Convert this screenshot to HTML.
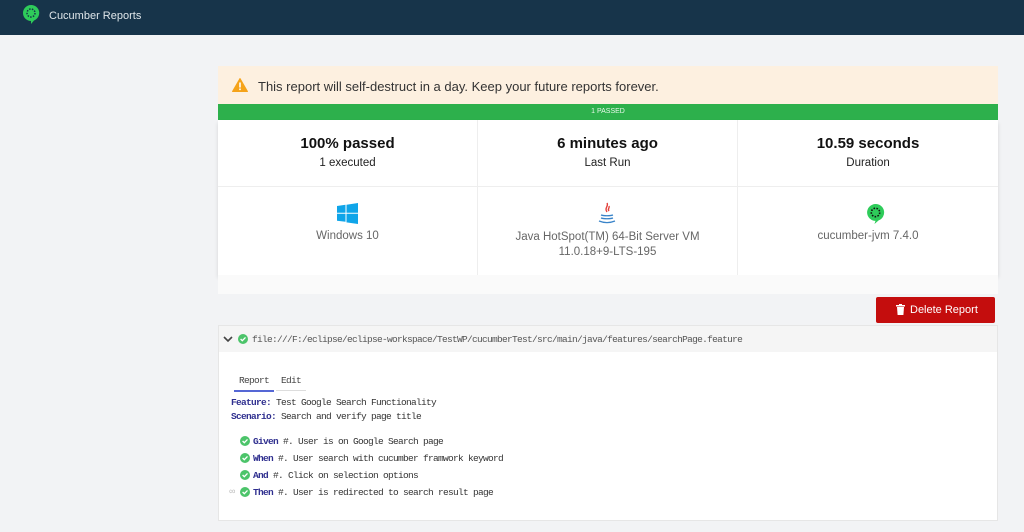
<!DOCTYPE html>
<html><head><meta charset="utf-8"><style>
*{margin:0;padding:0;box-sizing:border-box}
body{width:1024px;height:532px;overflow:hidden;background:#f2f3f5;font-family:"Liberation Sans",sans-serif;position:relative}
.a{position:absolute}
.hdr{left:0;top:0;width:1024px;height:35px;background:#17344a}
.c{text-align:center}
.mono{font-family:"Liberation Mono",monospace;font-size:9.5px;color:#333;letter-spacing:-0.7px;white-space:nowrap}
.kw{color:#2f2f8f;font-weight:bold}
</style></head><body>
<div class="a hdr"></div>
<svg class="a" style="left:22px;top:4px" width="18" height="20" viewBox="0 0 18 20"><path d="M9 1a8 8 0 1 0 0 16l0 3 3-3.5A8 8 0 0 0 9 1z" fill="#2ecc5a"/><circle cx="9" cy="9" r="4" fill="none" stroke="#17344a" stroke-width="1.5" stroke-dasharray="1.5 1.3"/></svg>
<div class="a" style="left:49px;top:10px;color:#dfe6ea;font-size:11px">Cucumber Reports</div>

<div class="a" style="left:218px;top:66px;width:780px;height:38px;background:#fdf0e0"></div>
<svg class="a" style="left:232px;top:78px" width="16" height="14" viewBox="0 0 16 14"><path d="M8 0.5L15.5 13.5H0.5Z" fill="#f5a31a" stroke="#f5a31a" stroke-linejoin="round"/><rect x="7.2" y="4.5" width="1.6" height="5" fill="#fff"/><rect x="7.2" y="10.5" width="1.6" height="1.6" fill="#fff"/></svg>
<div class="a" style="left:258px;top:79px;font-size:13px;color:#333">This report will self-destruct in a day. Keep your future reports forever.</div>
<div class="a c" style="left:218px;top:104px;width:780px;height:16px;background:#2db04c;color:#e8f8ea;font-size:7px;line-height:16px">1 PASSED</div>

<div class="a" style="left:218px;top:120px;width:780px;height:155px;background:#fff;box-shadow:0 3px 4px rgba(0,0,0,.12)"></div>
<div class="a" style="left:477px;top:120px;width:1px;height:155px;background:#eee"></div>
<div class="a" style="left:737px;top:120px;width:1px;height:155px;background:#eee"></div>
<div class="a" style="left:218px;top:186px;width:780px;height:1px;background:#eee"></div>

<div class="a c" style="left:218px;top:135px;width:259px;font-size:15px;font-weight:bold;color:#111">100% passed</div>
<div class="a c" style="left:218px;top:157px;width:259px;font-size:11.5px;color:#222">1 executed</div>
<div class="a c" style="left:478px;top:135px;width:259px;font-size:15px;font-weight:bold;color:#111">6 minutes ago</div>
<div class="a c" style="left:478px;top:157px;width:259px;font-size:11.5px;color:#222">Last Run</div>
<div class="a c" style="left:738px;top:135px;width:260px;font-size:15px;font-weight:bold;color:#111">10.59 seconds</div>
<div class="a c" style="left:738px;top:157px;width:260px;font-size:11.5px;color:#222">Duration</div>

<svg class="a" style="left:337px;top:203px" width="21" height="21" viewBox="0 0 21 21"><path d="M0 3l8.5-1.2v8H0zM9.5 1.7L21 0v9.8H9.5zM0 10.8h8.5v8L0 17.7zM9.5 10.8H21V21l-11.5-1.6z" fill="#0fa5e9"/></svg>
<div class="a c" style="left:218px;top:230px;width:259px;font-size:11.5px;color:#666">Windows 10</div>
<svg class="a" style="left:598px;top:202px" width="18" height="22" viewBox="0 0 18 22"><path d="M9 1c2 3-3 5 0 9M11 4c1 2-2 3 0 5" fill="none" stroke="#e3403a" stroke-width="1.4"/><path d="M3 13c3 1 9 1 12 0M3 16c3 1 9 1 12 0M1 19c5 2 11 2 16 0" fill="none" stroke="#3a84c9" stroke-width="1.3"/></svg>
<div class="a c" style="left:478px;top:230px;width:259px;font-size:11.5px;color:#666;line-height:15px">Java HotSpot(TM) 64-Bit Server VM<br>11.0.18+9-LTS-195</div>
<svg class="a" style="left:866px;top:203px" width="19" height="21" viewBox="0 0 18 20"><path d="M9 1a8 8 0 1 0 0 16l-1 3 4-3.5A8 8 0 0 0 9 1z" fill="#2ecc5a"/><circle cx="9" cy="9" r="4" fill="none" stroke="#111" stroke-width="1.5" stroke-dasharray="1.5 1.3"/></svg>
<div class="a c" style="left:738px;top:230px;width:260px;font-size:11.5px;color:#666">cucumber-jvm 7.4.0</div>

<div class="a" style="left:218px;top:275px;width:780px;height:19px;background:#fafafa"></div>
<div class="a" style="left:876px;top:297px;width:119px;height:26px;background:#c40d0d;border-radius:2px"></div>
<svg class="a" style="left:896px;top:304px" width="9" height="11" viewBox="0 0 9 11"><rect x="0" y="1" width="9" height="1.5" fill="#fff"/><rect x="3" y="0" width="3" height="1.5" fill="#fff"/><path d="M1 3h7l-.6 8H1.6z" fill="#fff"/></svg>
<div class="a" style="left:910px;top:304px;font-size:11px;color:#fff">Delete Report</div>

<div class="a" style="left:218px;top:325px;width:780px;height:196px;background:#fff;border:1px solid #e6e6e6"></div>
<div class="a" style="left:219px;top:326px;width:778px;height:26px;background:#f5f5f5"></div>
<svg class="a" style="left:223px;top:335px" width="10" height="8" viewBox="0 0 10 8"><path d="M1 2l4 4 4-4" fill="none" stroke="#444" stroke-width="1.6"/></svg>
<svg class="a" style="left:238px;top:334px" width="10" height="10" viewBox="0 0 10 10"><circle cx="5" cy="5" r="5" fill="#4cc46a"/><path d="M2.6 5l1.7 1.7 3.2-3.3" fill="none" stroke="#fff" stroke-width="1.3"/></svg>
<div class="a mono" style="left:252px;top:334px;color:#555">file:///F:/eclipse/eclipse-workspace/TestWP/cucumberTest/src/main/java/features/searchPage.feature</div>

<div class="a mono" style="left:239px;top:375px;color:#444">Report</div>
<div class="a mono" style="left:281px;top:375px;color:#444">Edit</div>
<div class="a" style="left:234px;top:390px;width:40px;height:1.5px;background:#5567d5"></div>
<div class="a" style="left:276px;top:390px;width:30px;height:1px;background:#ddd"></div>
<div class="a mono" style="left:231px;top:397px"><span class="kw">Feature:</span> Test Google Search Functionality</div>
<div class="a mono" style="left:231px;top:411px"><span class="kw">Scenario:</span> Search and verify page title</div>

<div class="a" style="left:240px;top:436px;line-height:0">
<svg width="10" height="10" viewBox="0 0 10 10"><circle cx="5" cy="5" r="5" fill="#4cc46a"/><path d="M2.6 5l1.7 1.7 3.2-3.3" fill="none" stroke="#fff" stroke-width="1.3"/></svg></div>
<div class="a mono" style="left:253px;top:436px"><span class="kw">Given</span> #. User is on Google Search page</div>
<div class="a" style="left:240px;top:453px;line-height:0">
<svg width="10" height="10" viewBox="0 0 10 10"><circle cx="5" cy="5" r="5" fill="#4cc46a"/><path d="M2.6 5l1.7 1.7 3.2-3.3" fill="none" stroke="#fff" stroke-width="1.3"/></svg></div>
<div class="a mono" style="left:253px;top:453px"><span class="kw">When</span> #. User search with cucumber framwork keyword</div>
<div class="a" style="left:240px;top:470px;line-height:0">
<svg width="10" height="10" viewBox="0 0 10 10"><circle cx="5" cy="5" r="5" fill="#4cc46a"/><path d="M2.6 5l1.7 1.7 3.2-3.3" fill="none" stroke="#fff" stroke-width="1.3"/></svg></div>
<div class="a mono" style="left:253px;top:470px"><span class="kw">And</span> #. Click on selection options</div>
<div class="a" style="left:229px;top:486px;color:#bbb;font-size:9px">&#8734;</div>
<div class="a" style="left:240px;top:487px;line-height:0">
<svg width="10" height="10" viewBox="0 0 10 10"><circle cx="5" cy="5" r="5" fill="#4cc46a"/><path d="M2.6 5l1.7 1.7 3.2-3.3" fill="none" stroke="#fff" stroke-width="1.3"/></svg></div>
<div class="a mono" style="left:253px;top:487px"><span class="kw">Then</span> #. User is redirected to search result page</div>
</body></html>
